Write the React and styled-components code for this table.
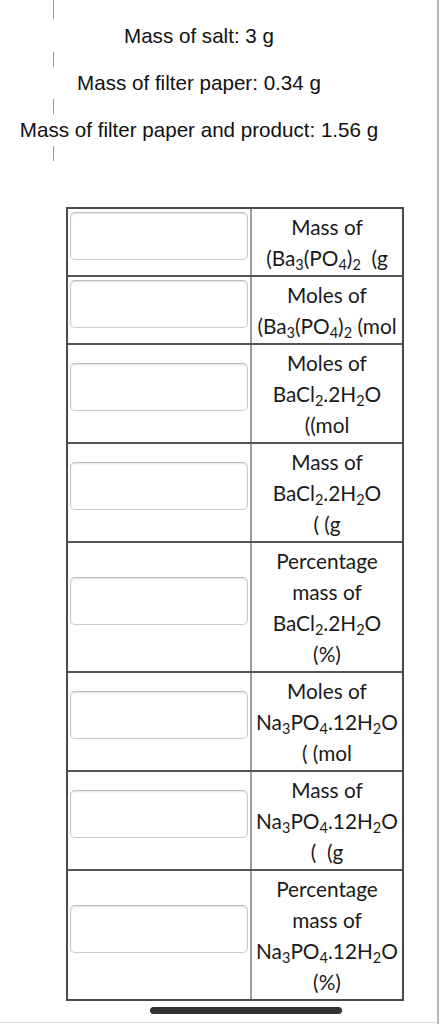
import styled, { createGlobalStyle } from 'styled-components'

const GlobalStyle = createGlobalStyle`
  html, body {
    margin: 0;
    padding: 0;
    background: #ffffff;
  }
  body {
    font-family: "Liberation Sans", Arial, sans-serif;
    color: #111;
  }
`

const rows = [
  [['Mass of'], ['(Ba', ['3'], '(PO', ['4'], ')', ['2'], '\u00a0\u00a0(g']],
  [['Moles of'], ['(Ba', ['3'], '(PO', ['4'], ')', ['2'], ' (mol']],
  [['Moles of'], ['BaCl', ['2'], '.2H', ['2'], 'O'], ['((mol']],
  [['Mass of'], ['BaCl', ['2'], '.2H', ['2'], 'O'], ['( (g']],
  [['Percentage'], ['mass of'], ['BaCl', ['2'], '.2H', ['2'], 'O'], ['(%)']],
  [['Moles of'], ['Na', ['3'], 'PO', ['4'], '.12H', ['2'], 'O'], ['( (mol']],
  [['Mass of'], ['Na', ['3'], 'PO', ['4'], '.12H', ['2'], 'O'], ['(\u00a0\u00a0(g']],
  [['Percentage'], ['mass of'], ['Na', ['3'], 'PO', ['4'], '.12H', ['2'], 'O'], ['(%)']],
]

const givens = [
  'Mass of salt: 3 g',
  'Mass of filter paper: 0.34 g',
  'Mass of filter paper and product: 1.56 g',
]

const App = () => {
  return (
    <Page>
      <GlobalStyle />
      <Givens>
        <Tick $first />
        {givens.map((g) => (
          <div key={g}>
            <GivenLine>{g}</GivenLine>
            <Tick />
          </div>
        ))}
      </Givens>

      <Table>
        {rows.map((lines, i) => (
          <Row key={i}>
            <InputCell>
              <AnswerBox type="text" aria-label={lines.map((l) => l.flat().join('')).join(' ')} />
            </InputCell>
            <LabelCell>
              {lines.map((parts, j) => (
                <LabelLine key={j}>
                  {parts.map((p, k) =>
                    Array.isArray(p) ? <Sub key={k}>{p[0]}</Sub> : <span key={k}>{p}</span>
                  )}
                </LabelLine>
              ))}
            </LabelCell>
          </Row>
        ))}
      </Table>

      <Footer>
        <ScrollThumb />
      </Footer>
    </Page>
  )
}

export default App

const Page = styled.div`
  width: 439px;
  height: 1024px;
  box-sizing: border-box;
  border-right: 2px solid #b4b4b4;
  display: flex;
  flex-direction: column;
  overflow: hidden;
`

const Givens = styled.section`
  width: 398px;
  display: flex;
  flex-direction: column;
`

const Tick = styled.div`
  height: ${(p) => (p.$first ? '20px' : '16px')};
  margin-left: 53px;
  display: flex;
  align-items: ${(p) => (p.$first ? 'flex-start' : 'center')};

  &::before {
    content: '';
    width: 1px;
    height: ${(p) => (p.$first ? '19px' : '15px')};
    background: #9a9a9a;
  }
`

const GivenLine = styled.p`
  margin: 0;
  height: 31px;
  line-height: 31px;
  font-size: 20.6px;
  text-align: center;
  white-space: nowrap;
  color: #111;
`

const Table = styled.div`
  margin: 46px 0 0 66px;
  width: 338px;
  box-sizing: border-box;
  border: 2px solid #4a4a4a;
  display: flex;
  flex-direction: column;
  flex-shrink: 0;
`

const Row = styled.div`
  display: grid;
  grid-template-columns: 184px 1fr;

  & + & {
    border-top: 2px solid #555;
  }
`

const InputCell = styled.div`
  border-right: 2px solid #9c9c9c;
  display: flex;
  align-items: center;
  justify-content: center;
  padding-bottom: 13px;
`

const AnswerBox = styled.input`
  width: 178px;
  height: 48px;
  box-sizing: border-box;
  margin: 0;
  border: 1px solid #cacaca;
  border-top-color: #bdbdbd;
  border-radius: 5px;
  background: #fff;
  box-shadow: inset 0 1px 2px rgba(0, 0, 0, 0.12);
  outline: none;
`

const LabelCell = styled.div`
  padding: 2px 0;
  display: flex;
  flex-direction: column;
  align-items: center;
  font-family: Lato, "Open Sans", sans-serif;
  font-size: 20.8px;
  color: #1a1a1a;
`

const LabelLine = styled.div`
  line-height: 31px;
  height: 31px;
  white-space: pre;
`

const Sub = styled.span`
  font-size: 14.5px;
  vertical-align: -4px;
  line-height: 0;
`

const Footer = styled.footer`
  margin-top: 6px;
  flex: 1;
  display: flex;
  flex-direction: column;
  align-items: flex-start;
  border-bottom: 1px solid #dedede;
  margin-bottom: 1px;
`

const ScrollThumb = styled.div`
  margin-left: 150px;
  width: 192px;
  height: 7px;
  border-radius: 4px;
  background: #333;
`
